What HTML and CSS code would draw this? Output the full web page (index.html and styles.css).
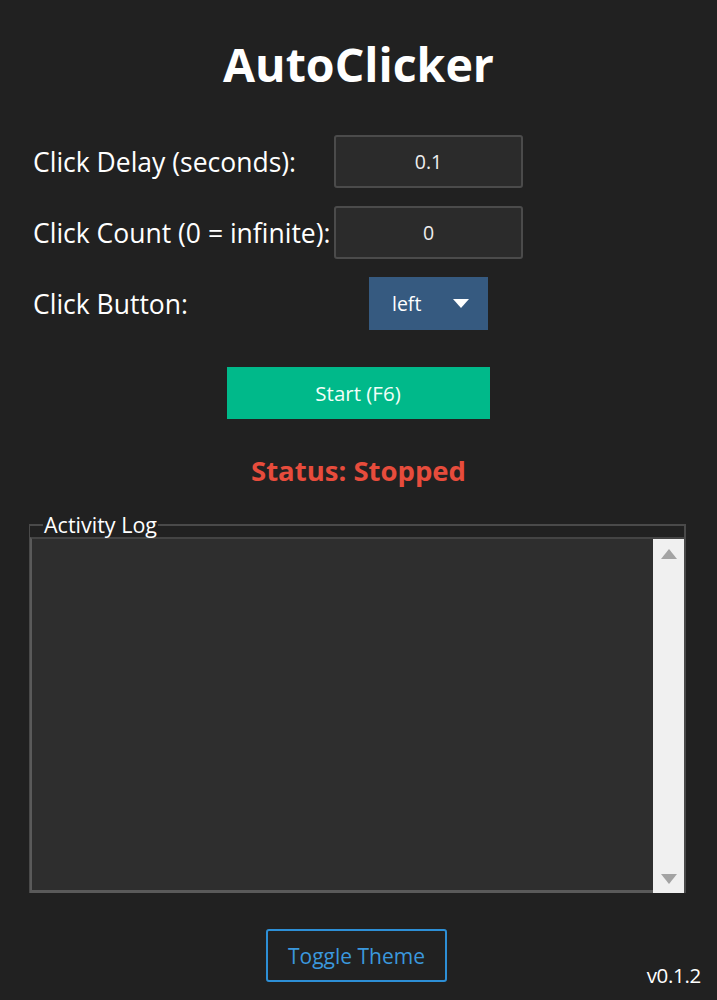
FILE: index.html
```html
<!DOCTYPE html>
<html lang="en">
<head>
<meta charset="utf-8">
<title>AutoClicker</title>
<link rel="stylesheet" href="styles.css">
</head>
<body>
<div class="app">
  <h1 class="title">AutoClicker</h1>

  <div class="settings">
    <label class="label" for="delay">Click Delay (seconds):</label>
    <div class="field"><input id="delay" class="entry" type="text" value="0.1"></div>

    <label class="label" for="count">Click Count (0 = infinite):</label>
    <div class="field"><input id="count" class="entry" type="text" value="0"></div>

    <span class="label">Click Button:</span>
    <div class="field field-center">
      <button class="dropdown" type="button">
        <span class="dropdown-text">left</span>
        <svg class="dropdown-arrow" width="16" height="9" viewBox="0 0 16 9"><path d="M0 0 H16 L8 9 Z" fill="#ffffff"/></svg>
      </button>
    </div>
  </div>

  <div class="actions">
    <button class="start" type="button">Start (F6)</button>
  </div>

  <div class="status">Status: Stopped</div>

  <fieldset class="group">
    <legend class="group-label">Activity Log</legend>
    <div class="log">
      <div class="log-text"></div>
      <div class="scrollbar">
        <svg class="arrow" width="16" height="10" viewBox="0 0 16 10"><path d="M8 0 L16 10 H0 Z" fill="#a3a3a3"/></svg>
        <svg class="arrow" width="16" height="10" viewBox="0 0 16 10"><path d="M0 0 H16 L8 10 Z" fill="#a3a3a3"/></svg>
      </div>
    </div>
  </fieldset>

  <div class="footer">
    <span></span>
    <button class="toggle" type="button">Toggle Theme</button>
    <span class="version">v0.1.2</span>
  </div>
</div>
</body>
</html>
```

FILE: styles.css
```css
* { box-sizing: border-box; }

html, body {
  margin: 0;
  padding: 0;
  background: #212121;
}

body {
  font-family: "Open Sans", "Noto Sans", "Liberation Sans", sans-serif;
  color: #ffffff;
  width: 717px;
  height: 1000px;
  overflow: hidden;
}

.app {
  display: flex;
  flex-direction: column;
  padding-top: 36px;
}

.title {
  margin: 0;
  height: 56px;
  line-height: 56px;
  text-align: center;
  font-size: 46.5px;
  font-weight: 700;
  color: #ffffff;
}

.settings {
  margin-top: 43px;
  padding-left: 33px;
  display: grid;
  grid-template-columns: 301px 189px;
  grid-auto-rows: 53px;
  row-gap: 18px;
  align-items: center;
}

.label {
  font-size: 26.5px;
  color: #ffffff;
  white-space: nowrap;
}

.field {
  height: 53px;
  display: flex;
}

.field-center {
  justify-content: center;
}

.entry {
  width: 100%;
  height: 100%;
  background: #2b2b2b;
  border: 2px solid #4b4b4b;
  border-radius: 3px;
  color: #eeeeee;
  font-family: inherit;
  font-size: 19.5px;
  text-align: center;
  outline: none;
  padding: 0;
}

.dropdown {
  width: 119px;
  height: 53px;
  background: #365a80;
  border: none;
  border-radius: 0;
  display: flex;
  align-items: center;
  padding: 0 19px 0 23px;
  justify-content: space-between;
  font-family: inherit;
  font-size: 19.5px;
  color: #ffffff;
}

.dropdown-text {
  line-height: 1;
}

.actions {
  margin-top: 37px;
  display: flex;
  justify-content: center;
}

.start {
  width: 263px;
  height: 52px;
  background: #00b98a;
  border: none;
  color: #f2fff8;
  font-family: inherit;
  font-size: 20.5px;
  padding: 0;
  margin-left: -1px;
}

.status {
  margin-top: 34px;
  height: 36px;
  line-height: 36px;
  text-align: center;
  font-size: 27.5px;
  font-weight: 700;
  color: #e74c3c;
}

.group {
  margin: 24px 31px 0 29px;
  padding: 0;
  border: 2px solid #4a4a4a;
  border-bottom: none;
  border-left-width: 1px;
  min-width: 0;
}

.group-label {
  margin-left: 13px;
  padding: 0 1px;
  font-size: 21.5px;
  line-height: 24px;
  color: #ffffff;
}

.log {
  height: 356px;
  display: flex;
  background: #2e2e2e;
  border-top: 2px solid #444444;
  border-left: 2px solid #5a5a5a;
  border-bottom: 3px solid #5a5a5a;
}

.log-text {
  flex: 1;
}

.scrollbar {
  width: 31px;
  background: #f0f0f0;
  display: flex;
  flex-direction: column;
  justify-content: space-between;
  align-items: center;
  padding: 10px 0 9px;
  margin-bottom: -3px;
}

.footer {
  margin-top: 36px;
  display: grid;
  grid-template-columns: 1fr auto 1fr;
  align-items: end;
  padding-right: 16px;
}

.toggle {
  grid-column: 2;
  width: 181px;
  height: 53px;
  margin-left: 12px;
  background: transparent;
  border: 2px solid #2d8fd6;
  border-radius: 3px;
  color: #3b98dd;
  font-family: inherit;
  font-size: 21px;
  padding: 0;
}

.version {
  grid-column: 3;
  justify-self: end;
  font-size: 20.5px;
  line-height: 20px;
  margin-bottom: -3px;
  color: #ffffff;
  letter-spacing: -0.3px;
}
```
